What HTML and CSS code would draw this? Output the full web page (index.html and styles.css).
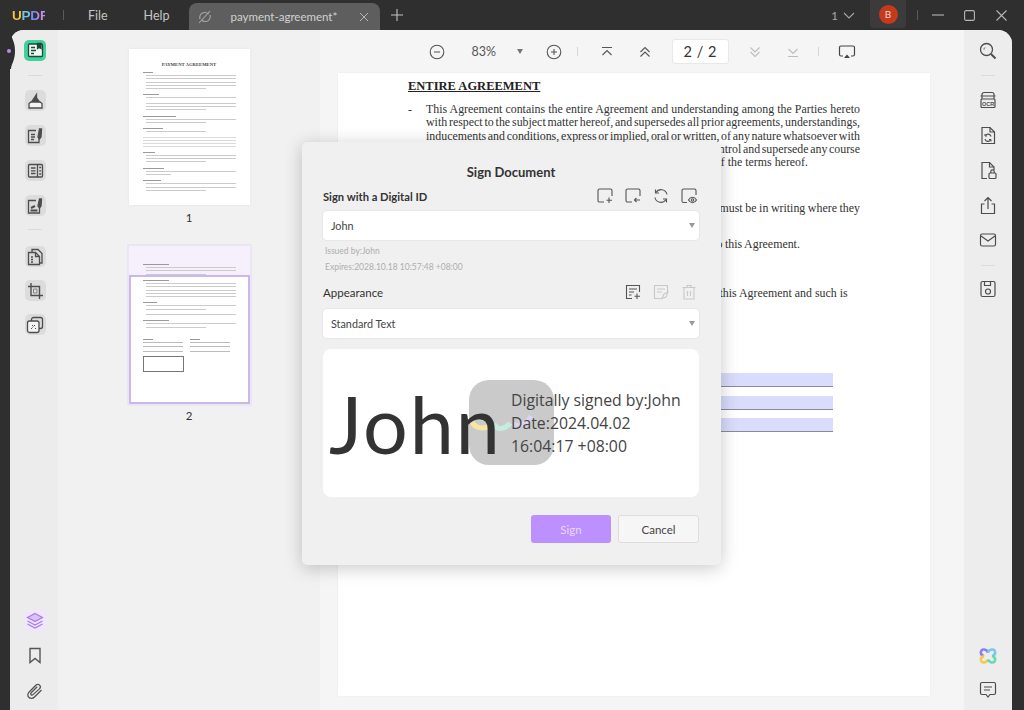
FILE: index.html
```html
<!DOCTYPE html>
<html lang="en">
<head>
<meta charset="utf-8">
<title>UPDF</title>
<link rel="stylesheet" href="styles.css">
</head>
<body>
<div class="app">
  <header class="titlebar">
    <span class="logo">UPDF</span>
    <span class="tsep"></span>
    <span class="menu menu-file">File</span>
    <span class="menu menu-help">Help</span>
    <div class="tab">
      <svg class="tab-ic" width="16" height="16" viewBox="0 0 16 16" fill="none" stroke="#a8a8a8" stroke-width="1.1"><path d="M3 10c-1-3 1-6 4-6.500 2-.3 3.500.5 4.500 1.500"/><path d="M13 6c1 3-1 6-4 6.500-2 .3-3.500-.5-4.500-1.500"/><path d="M2 14 13 2"/></svg>
      <span class="tab-name">payment-agreement*</span>
      <svg class="tab-x" width="10" height="10" viewBox="0 0 10 10" stroke="#b5b5b5" stroke-width="1"><path d="M1 1l8 8M9 1l-8 8"/></svg>
    </div>
    <svg class="tab-add" width="12" height="12" viewBox="0 0 12 12" stroke="#c4c4c4" stroke-width="1.1"><path d="M6 0v12M0 6h12"/></svg>
    <span class="count">1</span>
    <svg class="count-ch" width="12" height="7" viewBox="0 0 12 7" fill="none" stroke="#a5a5a5" stroke-width="1.1"><path d="M1 1l5 5 5-5"/></svg>
    <div class="userbox"><span class="avatar">B</span></div>
    <span class="tsep tsep-r"></span>
    <svg class="win win-min" width="12" height="12" viewBox="0 0 12 12" stroke="#b5b5b5" stroke-width="1.1"><path d="M0 6h12"/></svg>
    <svg class="win win-max" width="11" height="11" viewBox="0 0 11 11" fill="none" stroke="#b5b5b5" stroke-width="1.1"><rect x=".6" y=".6" width="9.800" height="9.800" rx="1.500"/></svg>
    <svg class="win win-close" width="11" height="11" viewBox="0 0 11 11" stroke="#b5b5b5" stroke-width="1.1"><path d="M.5.500l10 10M10.500.500l-10 10"/></svg>
  </header>

  <div class="workspace">
    <nav class="lefttools">
      <span class="tool tool-green"><svg width="17" height="17" viewBox="0 0 17 17" fill="none" stroke="#24463a" stroke-width="1.300"><path d="M2.500 2h12a1 1 0 0 1 1 1v10.500a1 1 0 0 1-1 1h-12a1 1 0 0 1-1-1V3a1 1 0 0 1 1-1z" fill="#eafaf4"/><path d="M4 5.500h4M4 8.500h5M4 11.500h3"/><path d="M10.500 1.500h3.500v5l-1.750-1.300-1.750 1.300z" fill="#24463a"/></svg></span>
      <span class="tdiv"></span>
      <span class="tool tool-soft"><svg width="17" height="18" viewBox="0 0 17 18" fill="none" stroke="#4d4d4d" stroke-width="1.300"><path d="M2 16v-4.500l2-1.500h9l2 1.500V16z" fill="#f4f4f4"/><path d="M4.500 10 9.500 2.500v3.500l3 4" fill="#4d4d4d"/></svg></span>
      <span class="tool tool-soft tool-gap"><svg width="18" height="18" viewBox="0 0 18 18" fill="none" stroke="#4d4d4d" stroke-width="1.300"><path d="M10 3.500H2.500v12h10.500V10"/><path d="M5 7.500h4M5 10h4M5 12.500h3"/><path d="M12 10l1.500-8h2L15 10l-1.500 2z" fill="#4d4d4d"/></svg></span>
      <span class="tool tool-soft tool-gap"><svg width="17" height="17" viewBox="0 0 17 17" fill="none" stroke="#4d4d4d" stroke-width="1.300"><rect x="1.500" y="2.500" width="14" height="12.500" rx="1"/><path d="M10.500 2.500V15M4 6h4.500M4 8.800h4.500M4 11.500h4.500"/><path d="M12.200 5.500h2M12.200 8.800h2M12.200 12h2"/></svg></span>
      <span class="tool tool-soft tool-gap"><svg width="18" height="18" viewBox="0 0 18 18" fill="none" stroke="#4d4d4d" stroke-width="1.300"><path d="M10 3.500H2.500V16h11v-6"/><path d="M4.500 13.500h7M5 11l4-2" stroke-width="2"/><path d="M12 9l1.500-7h2L15 9l-1.500 2z" fill="#4d4d4d"/></svg></span>
      <span class="tdiv tdiv-b"></span>
      <span class="tool tool-soft"><svg width="18" height="18" viewBox="0 0 18 18" fill="none" stroke="#4d4d4d" stroke-width="1.300"><path d="M6 4V1.500h6l4 4V15h-2"/><path d="M2.500 4.500h7l4 4V16.500h-11z"/><path d="M9.500 4.500v4h4M5 9h2M5 11.500h2M5 14h2"/></svg></span>
      <span class="tool tool-soft tool-crop"><svg width="18" height="18" viewBox="0 0 18 18" fill="none" stroke="#4d4d4d" stroke-width="1.400"><path d="M5 1v12.500h12"/><path d="M2 4.500h11.500V17"/><path d="M7.500 7h3.500v4H7.500z" stroke-width=".6"/></svg></span>
      <span class="tool tool-soft tool-copy"><svg width="18" height="18" viewBox="0 0 18 18" fill="none" stroke="#4d4d4d" stroke-width="1.300"><rect x="5.500" y="1.500" width="11" height="11" rx="2"/><rect x="1.500" y="5" width="11.500" height="11.500" rx="2" fill="#f4f4f4"/><path d="M5 13l1.500-1.500M7.500 10.500 9 9M6 9l1 1M9 12l1 1" stroke-width="1"/></svg></span>
      <span class="tool tool-layers"><svg width="18" height="18" viewBox="0 0 18 18" fill="none" stroke="#a87ce8" stroke-width="1.200"><path d="M9 1.500l7.500 4L9 9.500l-7.500-4z" fill="#d8c2f7"/><path d="M1.500 9 9 13l7.500-4"/><path d="M1.500 12 9 16l7.500-4"/></svg></span>
      <span class="tool tool-plain"><svg width="14" height="17" viewBox="0 0 14 17" fill="none" stroke="#555" stroke-width="1.400"><path d="M2 1.500h10V15.500L7 11.500l-5 4z"/></svg></span>
      <span class="tool tool-plain"><svg width="18" height="18" viewBox="0 0 18 18" fill="none" stroke="#555" stroke-width="1.300"><path d="M15.500 8 8.500 15c-1.800 1.800-4.300 1.800-5.700.3-1.400-1.400-1.300-3.700.4-5.300l6.600-6.700c1.200-1.200 2.800-1.200 3.800-.2s1 2.600-.2 3.800L7 12.600c-.6.600-1.400.6-1.900.1s-.5-1.300.1-1.900l6-6"/></svg></span>
    </nav>

    <aside class="thumbs">
      <div class="thumb">
        <div class="th-title">PAYMENT AGREEMENT</div>
        <i class="h h1"></i><i class="l"></i><i class="l"></i><i class="l"></i><i class="l"></i><i class="l s"></i>
        <i class="h h2"></i><i class="l"></i><i class="l gp"></i><i class="l"></i><i class="l s"></i>
        <i class="h h3"></i><i class="l"></i><i class="l s"></i>
        <i class="h h4"></i><i class="l s"></i><i class="r gp"></i><i class="r"></i><i class="r"></i><i class="r"></i>
        <i class="h h5 gp"></i><i class="l"></i><i class="l"></i><i class="l s"></i>
        <i class="h h6"></i><i class="l"></i><i class="l xs"></i>
        <i class="h h7"></i><i class="l"></i><i class="l"></i><i class="l s"></i>
      </div>
      <div class="th-label">1</div>
      <div class="thumb thumb-sel">
        <div class="th-prev">
          <i class="h h2b"></i><i class="l"></i><i class="l"></i><i class="l s"></i>
        </div>
        <div class="th-cur">
          <i class="h h2b"></i><i class="l"></i><i class="l"></i><i class="l"></i><i class="l"></i><i class="l"></i>
          <i class="h h1b"></i><i class="l"></i><i class="l s"></i><i class="l gp"></i>
          <i class="h h2b"></i><i class="l"></i><i class="l s"></i>
          <div class="sigs">
            <div class="sig"><i class="h h1"></i><i class="r"></i><i class="r"></i><i class="r"></i></div>
            <div class="sig"><i class="h h1"></i><i class="r"></i><i class="r"></i><i class="r"></i></div>
          </div>
          <div class="sigbox"></div>
        </div>
      </div>
      <div class="th-label th-label-2">2</div>
    </aside>

    <main class="main">
      <div class="viewbar">
        <svg class="vi" width="16" height="16" viewBox="0 0 16 16" fill="none" stroke="#555" stroke-width="1.100"><circle cx="8" cy="8" r="6.800"/><path d="M5 8h6"/></svg>
        <span class="zoomval">83%</span>
        <span class="caret caret-v"></span>
        <svg class="vi vi-plus" width="16" height="16" viewBox="0 0 16 16" fill="none" stroke="#555" stroke-width="1.100"><circle cx="8" cy="8" r="6.800"/><path d="M5 8h6M8 5v6"/></svg>
        <span class="vsep vsep-a"></span>
        <svg class="vi vi-top" width="14" height="14" viewBox="0 0 14 14" fill="none" stroke="#555" stroke-width="1.100"><path d="M2 2.500h10M2.500 10 7 5.500 11.500 10"/></svg>
        <svg class="vi vi-g" width="14" height="14" viewBox="0 0 14 14" fill="none" stroke="#555" stroke-width="1.100"><path d="M2.500 7 7 2.500 11.500 7M2.500 11.500 7 7l4.500 4.500"/></svg>
        <div class="pagebox">2 / 2</div>
        <svg class="vi vi-d" width="14" height="14" viewBox="0 0 14 14" fill="none" stroke="#bdbdbd" stroke-width="1.100"><path d="M2.500 2.500 7 7l4.500-4.500M2.500 7 7 11.500 11.500 7"/></svg>
        <svg class="vi vi-g" width="14" height="14" viewBox="0 0 14 14" fill="none" stroke="#bdbdbd" stroke-width="1.100"><path d="M2.500 4 7 8.500 11.500 4M2 11.500h10"/></svg>
        <span class="vsep"></span>
        <svg class="vi vi-d" width="18" height="16" viewBox="0 0 18 16" fill="none" stroke="#444" stroke-width="1.200"><path d="M5 12H3a1.500 1.500 0 0 1-1.500-1.500v-7A1.500 1.500 0 0 1 3 2h12a1.500 1.500 0 0 1 1.500 1.500v7A1.500 1.500 0 0 1 15 12h-2"/><path d="M9 10.500l3 3.500H6z" fill="#444" stroke="none"/></svg>
      </div>
      <article class="page">
        <h2 class="doc-h">ENTIRE AGREEMENT</h2>
        <div class="clause">
          <span class="dash">-</span>
          <div class="clause-body">
            <div class="ln">This Agreement contains the entire Agreement and understanding among the Parties hereto</div>
            <div class="ln ln-t">with respect to the subject matter hereof, and supersedes all prior agreements, understandings,</div>
            <div class="ln ln-t">inducements and conditions, express or implied, oral or written, of any nature whatsoever with</div>
            <div class="ln ln-t">respect to the subject matter hereof. The express terms hereof control and supersede any course</div>
            <div class="ln last ln-e">of the terms hereof.</div>
            <div class="ln ln-a">Any amendment or modification of this Agreement by Parties must be in writing where they</div>
            <div class="ln last ln-b">Any additional term must be agreed in writing by the Parties to this Agreement.</div>
            <div class="ln last ln-c">The Parties agree they have no other terms than are set out in this Agreement and such is</div>
          </div>
        </div>
        <div class="fields">
          <div class="field"></div>
          <div class="field"></div>
          <div class="field"></div>
        </div>
      </article>
    </main>

    <nav class="righttools">
      <span class="rt"><svg width="18" height="18" viewBox="0 0 18 18" fill="none" stroke="#4d4d4d" stroke-width="1.300"><circle cx="7.500" cy="7.500" r="6"/><path d="M12 12l4.500 4.500" stroke-width="2"/><path d="M5 7.500a2.500 2.500 0 0 1 1-2" stroke-width="1"/></svg></span>
      <span class="rdiv"></span>
      <span class="rt"><svg width="18" height="18" viewBox="0 0 18 18" fill="none" stroke="#4d4d4d" stroke-width="1.200"><path d="M3 8V3.500A2 2 0 0 1 5 1.500h8a2 2 0 0 1 2 2V8"/><path d="M1.500 5h15"/><rect x="2" y="8" width="14" height="8.500" rx="1"/><text class="ocr" x="9" y="14.500">OCR</text></svg></span>
      <span class="rt rt-g"><svg width="18" height="19" viewBox="0 0 18 19" fill="none" stroke="#4d4d4d" stroke-width="1.200"><path d="M3 1.500h8l4.500 4.500v11.500H3z"/><path d="M11 1.500V6h4.500"/><path d="M12 10.500a3 3 0 0 0-5.500-1M6 13a3 3 0 0 0 5.500 1"/><path d="M6 8v2h2M12 15.500v-2h-2" stroke-width="1"/></svg></span>
      <span class="rt rt-g"><svg width="18" height="19" viewBox="0 0 18 19" fill="none" stroke="#4d4d4d" stroke-width="1.200"><path d="M8 17.500H3v-16h7.500L15 6v3"/><path d="M10.500 1.500V6H15"/><rect x="10" y="12" width="7" height="5.500" rx="1"/><path d="M11.800 12v-1.500a1.700 1.700 0 0 1 3.400 0V12"/></svg></span>
      <span class="rt rt-g"><svg width="18" height="19" viewBox="0 0 18 19" fill="none" stroke="#4d4d4d" stroke-width="1.200"><path d="M5.500 8H2.500v9.500h13V8h-3"/><path d="M9 13V1.500M5.500 5 9 1.500 12.500 5"/></svg></span>
      <span class="rt rt-g"><svg width="18" height="18" viewBox="0 0 18 18" fill="none" stroke="#4d4d4d" stroke-width="1.200"><rect x="1.500" y="3" width="15" height="12" rx="1.500"/><path d="M2 5l7 5 7-5"/></svg></span>
      <span class="rdiv rdiv-b"></span>
      <span class="rt"><svg width="18" height="18" viewBox="0 0 18 18" fill="none" stroke="#4d4d4d" stroke-width="1.200"><path d="M3.500 1.500h11a1.500 1.500 0 0 1 1.500 1.500v12a1.500 1.500 0 0 1-1.500 1.500h-11A1.500 1.500 0 0 1 2 15V3a1.500 1.500 0 0 1 1.500-1.500z"/><path d="M5.500 1.500v4h6v-4"/><circle cx="9" cy="11.500" r="2.500"/></svg></span>
      <span class="rt rt-ai"><svg width="18" height="18" viewBox="0 0 18 18" fill="none" stroke-width="2.600"><path d="M9 5.500C8 2.500 3 1 2 4.500 1.500 7 3 8.500 5 9" stroke="#8f7cf0"/><path d="M9 5.500c1-3 6-4.500 7-1 .5 2.500-1 4-3 4.500" stroke="#7cc7ee"/><path d="M5 9c-2 .5-3.500 2-3 4.500 1 3.500 6 2 7-1" stroke="#f5c94c"/><path d="M13 9c2 .5 3.500 2 3 4.500-1 3.500-6 2-7-1" stroke="#63dbb0"/></svg></span>
      <span class="rt rt-c"><svg width="18" height="18" viewBox="0 0 18 18" fill="none" stroke="#4d4d4d" stroke-width="1.200"><path d="M3 1.500h12A1.500 1.500 0 0 1 16.500 3v9a1.500 1.500 0 0 1-1.500 1.500h-4L9 16l-2-2.500H3A1.500 1.500 0 0 1 1.500 12V3A1.500 1.500 0 0 1 3 1.500z"/><path d="M5 6h8M5 9h6"/></svg></span>
    </nav>
  </div>

  <svg class="notch" width="12" height="36" viewBox="0 0 12 36"><path d="M0 0h2c0 5 4 8 4 18S2 31 2 36H0z" fill="#2f2f2f"/></svg>
  <span class="notch-dot"></span>

  <section class="dialog">
    <h1 class="dlg-title">Sign Document</h1>
    <div class="dlg-row">
      <span class="dlg-label dlg-label-b">Sign with a Digital ID</span>
      <div class="dlg-icons">
        <svg width="16" height="16" viewBox="0 0 16 16" fill="none" stroke="#555" stroke-width="1.100"><path d="M7 14H2.500A1.500 1.500 0 0 1 1 12.500v-10A1.500 1.500 0 0 1 2.500 1h11A1.500 1.500 0 0 1 15 2.500V8"/><path d="M12 9.500v5.500M9.500 12.200H15"/></svg>
        <svg width="16" height="16" viewBox="0 0 16 16" fill="none" stroke="#555" stroke-width="1.100"><path d="M7 14H2.500A1.500 1.500 0 0 1 1 12.500v-10A1.500 1.500 0 0 1 2.500 1h11A1.500 1.500 0 0 1 15 2.500V8"/><path d="M15 12H9.500M11.500 10l-2 2 2 2"/></svg>
        <svg width="16" height="16" viewBox="0 0 16 16" fill="none" stroke="#555" stroke-width="1.100"><path d="M14 6.500A6 6 0 0 0 3 4.500M2 9.500a6 6 0 0 0 11 2"/><path d="M2.500 1.500v3.500H6M13.500 14.500V11H10"/></svg>
        <svg width="16" height="16" viewBox="0 0 16 16" fill="none" stroke="#555" stroke-width="1.100"><path d="M6 14.500H2.500A1.500 1.500 0 0 1 1 13V2.500A1.500 1.500 0 0 1 2.500 1h11A1.500 1.500 0 0 1 15 2.500V7"/><path d="M7.500 12c1-1.800 2.300-2.700 4-2.700s3 .9 4 2.700c-1 1.800-2.300 2.700-4 2.700s-3-.9-4-2.700z"/><circle cx="11.500" cy="12" r="1.200"/></svg>
      </div>
    </div>
    <div class="select"><span>John</span><span class="caret"></span></div>
    <p class="meta meta-1">Issued by:John</p>
    <p class="meta">Expires:2028.10.18 10:57:48 +08:00</p>
    <div class="dlg-row dlg-row-2">
      <span class="dlg-label">Appearance</span>
      <div class="dlg-icons">
        <svg width="16" height="16" viewBox="0 0 16 16" fill="none" stroke="#555" stroke-width="1.100"><path d="M7 14.500H1.500v-13h13V8"/><path d="M4 5h8M4 8h5M4 11h2.500"/><path d="M12 9.500v5.500M9.500 12.200H15"/></svg>
        <svg width="16" height="16" viewBox="0 0 16 16" fill="none" stroke="#c9c9c9" stroke-width="1.100"><path d="M9 14.500H1.500v-13h13V8"/><path d="M4 5h8M4 8h5"/><path d="M9 14.500 11 10l4-2-2 5z"/></svg>
        <svg width="16" height="16" viewBox="0 0 16 16" fill="none" stroke="#c9c9c9" stroke-width="1.100"><path d="M1.500 3.500h13M6 3.500V1.500h4v2M3 3.500v11.500h10V3.500M6.500 7v5M9.500 7v5"/></svg>
      </div>
    </div>
    <div class="select select-2"><span>Standard Text</span><span class="caret"></span></div>
    <div class="preview">
      <div class="watermark">
        <svg width="85" height="85" viewBox="0 0 85 85" fill="none" stroke-width="5"><path d="M3 42c3 7 14 8 20 2" stroke="#f6e6a2"/><path d="M25 44c3 7 12 5 16-1" stroke="#c6ecdf"/><path d="M44 44c4 3 14 1 18-8" stroke="#ddd3f1"/></svg>
      </div>
      <span class="sig-name">John</span>
      <div class="sig-info">
        <div>Digitally signed by:John</div>
        <div>Date:2024.04.02</div>
        <div>16:04:17 +08:00</div>
      </div>
    </div>
    <div class="dlg-actions">
      <button class="btn btn-sign">Sign</button>
      <button class="btn btn-cancel">Cancel</button>
    </div>
  </section>
</div>
</body>
</html>
```
FILE: styles.css
```css
* { box-sizing: border-box; }
html, body { margin: 0; padding: 0; height: 100%; }
body {
  background: #2f2f2f;
  font-family: "Lato", "Open Sans", sans-serif;
  overflow: hidden;
}
.app { position: relative; width: 1024px; height: 710px; display: flex; flex-direction: column; }

/* title bar */
.titlebar { height: 30px; flex: none; display: flex; align-items: center; padding-left: 12px; color: #c6c6c6; font-size: 12.500px; }
.logo {
  width: 33px; font: bold 13.500px "Liberation Sans", sans-serif; letter-spacing: -.2px;
  background: linear-gradient(90deg, #f6c644 0 26%, #6fc6e6 34% 52%, #7f8df2 60% 74%, #c78be8 82%);
  -webkit-background-clip: text; background-clip: text; color: transparent;
}
.tsep { width: 1px; height: 10px; background: #5a5a5a; margin-left: 18px; }
.menu-file { margin-left: 24px; }
.menu-help { margin-left: 36px; }
.tab {
  margin-left: 19px; margin-top: 3px; width: 191px; height: 27px; display: flex; align-items: center;
  background: #5e5e5e; border-radius: 8px 8px 0 0; padding-left: 8px; color: #d2d2d2; font-size: 11.500px;
}
.tab-name { margin-left: 18px; width: 107px; white-space: nowrap; }
.tab-x { margin-left: 21px; }
.tab-add { margin-left: 11px; }
.count { margin-left: auto; font-size: 11.500px; color: #a8a8a8; }
.count-ch { margin-left: 5px; }
.userbox { margin-left: 15px; width: 36px; height: 28px; align-self: flex-start; background: #3b3b3b; display: flex; align-items: center; justify-content: center; border-radius: 0 0 3px 3px; }
.avatar { width: 19px; height: 19px; border-radius: 50%; background: #c53a1a; color: #f0d6cf; font-size: 10px; display: flex; align-items: center; justify-content: center; }
.tsep-r { margin-left: 11px; }
.win-min { margin-left: 14px; }
.win-max { margin-left: 20px; }
.win-close { margin-left: 21px; margin-right: 17px; }

/* workspace */
.workspace { flex: 1; min-height: 0; display: flex; margin: 0 12px 0 10px; border-radius: 14px 14px 0 0; overflow: hidden; background: #f4f4f4; }
.lefttools { width: 48px; flex: none; background: #ececec; display: flex; flex-direction: column; align-items: center; padding: 10px 0 9px 2px; }
.tool { width: 21px; height: 21px; flex: none; border-radius: 5px; display: flex; align-items: center; justify-content: center; }
.tool-green { background: #3fd09c; width: 22px; }
.tool-soft { background: #dcdcdc; }
.tool-gap { margin-top: 14px; }
.tool-crop { margin-top: 13px; }
.tool-copy { margin-top: 13px; }
.tool-layers { margin-top: auto; background: #f1e6ff; }
.tool-plain { margin-top: 14px; }
.tdiv { width: 14px; height: 1px; flex: none; background: #dadada; margin: 14px 0; }
.tdiv-b { margin: 13px 0 16px; }

/* thumbnails */
.thumbs { width: 262px; flex: none; background: #f1f1f1; display: flex; flex-direction: column; align-items: center; padding-top: 19px; }
.thumb { width: 121px; height: 156px; background: #fff; padding: 13px 14px 0; display: flex; flex-direction: column; box-shadow: 0 0 3px rgba(0,0,0,.06); }
.thumb i { display: block; flex: none; }
.th-title { font: bold 4.700px "Liberation Serif", serif; text-align: center; color: #444; line-height: 6px; white-space: nowrap; margin-bottom: 1px; }
.h { height: 1px; background: #9a9a9a; margin: 3px 0 2px; }
.l { height: 1px; background: #cbcbcb; margin: 0 0 2.300px 3px; }
.r { height: 1px; background: #dadada; margin-bottom: 2.300px; }
.l.s { margin-right: 30px; }
.l.xs { margin-right: 65px; }
.gp { margin-top: 2px !important; }
.h1 { width: 10px; } .h2 { width: 16px; } .h3 { width: 33px; } .h4 { width: 20px; } .h5 { width: 12px; } .h6 { width: 21px; } .h7 { width: 18px; }
.h1b { width: 14px; } .h2b { width: 26px; }
.th-label { font-size: 11.500px; color: #333; line-height: 14px; margin-top: 6px; height: 35px; }
.th-label-2 { margin-top: 5px; }
.thumb-sel { padding: 0; height: 158px; box-shadow: 0 0 0 2px #ece5f6; background: #f6f0fd; }
.th-prev { height: 29px; padding: 15px 14px 0; overflow: hidden; }
.th-cur { flex: 1; background: #fff; border: 2px solid #cbb7ea; padding: 0 12px; display: flex; flex-direction: column; }
.sigs { display: flex; gap: 7px; margin-top: 6px; }
.sig { width: 40px; }
.sig .r { margin-bottom: 3.500px; background: #bbb; }
.sigbox { width: 41px; height: 16px; border: 1px solid #777; margin-top: 1px; }

/* viewer */
.main { flex: 1; min-width: 0; display: flex; flex-direction: column; background: #f5f5f5; }
.viewbar { height: 43px; flex: none; display: flex; align-items: center; justify-content: center; gap: 18px; font-size: 12.500px; color: #555; }
.zoomval { margin-left: 9px; width: 24px; white-space: nowrap; }
.caret { width: 0; height: 0; border-left: 3.500px solid transparent; border-right: 3.500px solid transparent; border-top: 5px solid #777; }
.caret-v { margin-left: 3px; }
.vi-plus { margin-left: 5px; }
.vsep-a { margin-left: -3px; }
.vi-top { margin-left: 4px; }
.vi-g { margin-left: 6px; }
.vi-d { margin-left: 1px; }
.vsep { width: 1px; height: 9px; background: #d6d6d6; }
.pagebox { margin-left: 2px; width: 57px; height: 25px; background: #fff; border: 1px solid #e8e8e8; border-radius: 3px; display: flex; align-items: center; justify-content: center; font-size: 14.500px; color: #333; word-spacing: 1px; }
.page { flex: 1; margin: 0 34px 14px 18px; background: #fff; padding: 5px 0 0 70px; font-family: "Liberation Serif", serif; color: #333; box-shadow: 0 0 2px rgba(0,0,0,.05); }
.doc-h { margin: 0 0 9px; font-size: 12.500px; line-height: 16px; font-weight: bold; text-decoration: underline; color: #222; }
.clause { display: flex; font-size: 11.900px; line-height: 13.300px; }
.dash { width: 18px; flex: none; }
.clause-body { width: 434px; flex: none; }
.ln { white-space: nowrap; text-align: justify; text-align-last: justify; height: 13.300px; }
.ln-t { word-spacing: -1.400px; }
.ln.last { text-align: left; text-align-last: left; }
.ln.ln-e { text-align: right; text-align-last: right; padding-right: 52px; }
.ln-a { margin-top: 33px; word-spacing: -.5px; }
.ln-b { margin-top: 22.700px; word-spacing: -.35px; }
.ln-c { margin-top: 35px; }
.fields { margin: 73px 0 0 190px; width: 235px; display: flex; flex-direction: column; gap: 8.500px; }
.field { height: 14px; background: #d9dcfb; border-bottom: 1px solid #8a8a9a; }

/* right tools */
.righttools { width: 48px; flex: none; background: #ededed; display: flex; flex-direction: column; align-items: center; padding: 11px 0 10px; }
.rt { width: 20px; height: 20px; flex: none; display: flex; align-items: center; justify-content: center; }
.rt-g { margin-top: 15px; }
.rt-ai { margin-top: auto; }
.rt-c { margin-top: 14px; }
.rdiv { width: 14px; height: 1px; flex: none; background: #dcdcdc; margin: 14px 0; }
.rdiv-b { margin: 15px 0 13px; }
.ocr { font: bold 5.500px "Liberation Sans", sans-serif; fill: #4d4d4d; stroke: none; text-anchor: middle; }

/* overlays */
.notch { position: absolute; left: 9px; top: 33px; }
.notch-dot { position: absolute; left: 7px; top: 49px; width: 4px; height: 4px; border-radius: 50%; background: #b98cf0; }

.dialog {
  position: absolute; left: 302px; top: 142px; width: 419px; height: 423px;
  background: #f0f0f0; border-radius: 5px; box-shadow: 0 3px 18px rgba(0,0,0,.22);
  padding: 21px 22px 0 21px; display: flex; flex-direction: column;
}
.dlg-title { margin: 0; font-size: 13px; line-height: 18px; font-weight: 700; color: #333; text-align: center; }
.dlg-row { display: flex; justify-content: space-between; align-items: center; height: 18px; margin-top: 6px; }
.dlg-row-2 { margin-top: 8px; }
.dlg-label { font-size: 11.500px; color: #333; white-space: nowrap; }
.dlg-label-b { font-size: 11.200px; font-weight: 700; }
.dlg-icons { display: flex; gap: 12px; margin-right: 2px; }
.select {
  margin-top: 6px; height: 29px; flex: none; background: #fff; border-radius: 4px; box-shadow: 0 0 2px rgba(0,0,0,.12);
  display: flex; align-items: center; justify-content: space-between; padding: 0 4px 0 8px; font-size: 10.800px; color: #444;
}
.select-2 { margin-top: 8px; }
.select .caret { border-top-color: #999; }
.meta { margin: 0; font-size: 8.500px; line-height: 16px; color: #aeaeae; padding-left: 2px; }
.meta-1 { margin-top: 3px; }
.preview {
  position: relative; margin-top: 11px; height: 148px; flex: none; background: #fff; border-radius: 8px;
  display: flex; align-items: center; padding-left: 6px; color: #333;
}
.watermark { position: absolute; left: 146px; top: 31px; width: 85px; height: 85px; border-radius: 20px; background: #cacaca; }
.sig-name { position: relative; font: 79px/1 "Lato", "Open Sans", sans-serif; letter-spacing: 2px; width: 182px; white-space: nowrap; }
.sig-info { position: relative; font: 15.800px/23px "Open Sans", sans-serif; color: #444; white-space: nowrap; }
.dlg-actions { margin-top: 18px; display: flex; justify-content: flex-end; gap: 7px; }
.btn { width: 81px; height: 28px; border-radius: 3px; font: 11.500px "Lato", sans-serif; padding: 0; }
.btn-sign { width: 80px; background: #bd90ff; border: 0; color: #e8d8ff; }
.btn-cancel { background: #f6f6f6; border: 1px solid #dedede; color: #444; }
```
